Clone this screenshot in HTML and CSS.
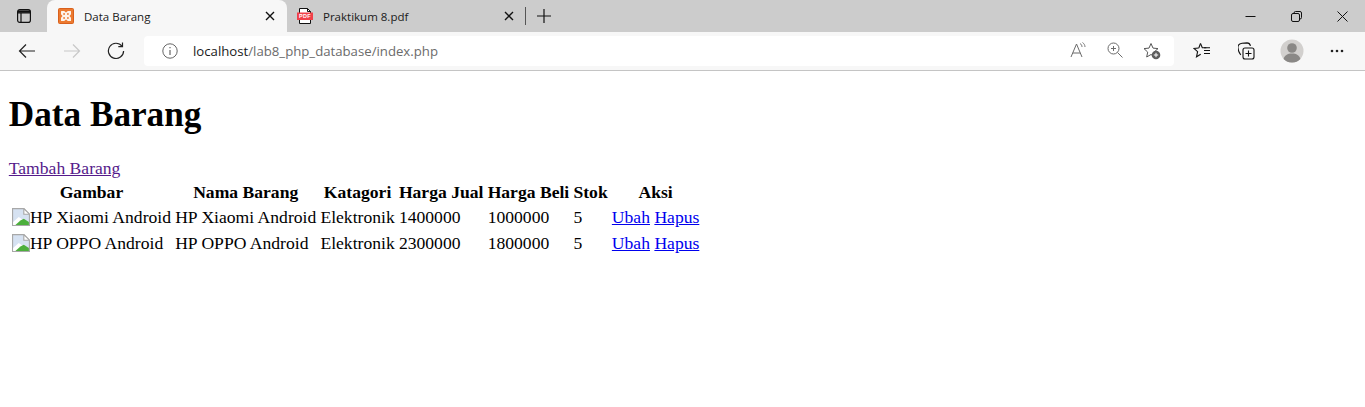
FILE: index.html
```html
<!DOCTYPE html>
<html lang="id">
<head>
  <meta charset="UTF-8" />
  <meta name="viewport" content="width=device-width, initial-scale=1.0" />
  <title>Data Barang</title>
  <link rel="stylesheet" href="styles.css">
</head>
<body>
  <header class="browser">
    <div class="tabstrip">
      <div class="strip-btn">
        <svg width="16" height="16" viewBox="0 0 16 16" fill="none" stroke="#111" stroke-width="1.2"><rect x="1.6" y="1.6" width="12.8" height="12.8" rx="2.2"/><path d="M1.6 5h12.8M5 5v9.4" /><path d="M2 2.4h12v2.4H2z" fill="#111" stroke="none"/></svg>
      </div>
      <div class="tab tab-active">
        <svg class="tab-icon" width="16" height="16" viewBox="0 0 16 16"><rect x=".5" y=".5" width="15" height="15" rx="1" fill="#ec7a30" stroke="#d9601c"/><path d="M3 3.500q0-.5.5-.5h2.700l1.800 1.500L9.800 3h2.700q.5 0 .5.5v2.700L11.500 8 13 9.800v2.700q0 .5-.5.5H9.800L8 11.500 6.200 13H3.500q-.5 0-.5-.5V9.800L4.500 8 3 6.200z" fill="#fdf3ea"/><path d="M5.200 5.200h1.800v1.500H5.200zM9 5.200h1.800v1.500H9zM5.200 9.300h1.800v1.500H5.200zM9 9.300h1.800v1.500H9z" fill="#ec7a30"/></svg>
        <span class="tab-title">Data Barang</span>
        <svg class="tab-close" width="10" height="10" viewBox="0 0 10 10" stroke="#111" stroke-width="1.4"><path d="M1 1l8 8M9 1L1 9"/></svg>
      </div>
      <div class="tab tab-last">
        <svg class="tab-icon" width="16" height="16" viewBox="0 0 16 16"><path d="M2.500.5h8l3 3v12h-11z" fill="#fff" stroke="#111"/><path d="M10.500.5v3h3" fill="none" stroke="#111"/><rect y="4.500" width="16" height="7.500" fill="#f1404a"/><text x="8" y="10.300" text-anchor="middle" class="pdf-label">PDF</text></svg>
        <span class="tab-title">Praktikum 8.pdf</span>
        <svg class="tab-close" width="10" height="10" viewBox="0 0 10 10" stroke="#111" stroke-width="1.4"><path d="M1 1l8 8M9 1L1 9"/></svg>
      </div>
      <div class="tab-divider"></div>
      <div class="new-tab">
        <svg width="14" height="14" viewBox="0 0 14 14" stroke="#111" stroke-width="1.2"><path d="M7 0v14M0 7h14"/></svg>
      </div>
      <div class="window-controls">
        <div class="win-btn"><svg width="11" height="11" viewBox="0 0 11 11" stroke="#111"><path d="M.5 5.500h10"/></svg></div>
        <div class="win-btn"><svg width="11" height="11" viewBox="0 0 11 11" fill="none" stroke="#111"><rect x=".5" y="2.500" width="8" height="8" rx="1.500"/><path d="M3 2.400V2A1.500 1.500 0 0 1 4.500.5h4.500A1.500 1.500 0 0 1 10.500 2v4.500A1.500 1.500 0 0 1 9 8"/></svg></div>
        <div class="win-btn"><svg width="11" height="11" viewBox="0 0 11 11" stroke="#111"><path d="M.5.5l10 10M10.500.5l-10 10"/></svg></div>
      </div>
    </div>
    <div class="toolbar">
      <div class="nav-btn"><svg width="18" height="16" viewBox="0 0 18 16" fill="none" stroke="#222" stroke-width="1.200"><path d="M17 8H1.500M8 1.500L1.500 8 8 14.500"/></svg></div>
      <div class="nav-btn"><svg width="18" height="16" viewBox="0 0 18 16" fill="none" stroke="#c8c8c8" stroke-width="1.200"><path d="M1 8h15.500M10 1.500L16.500 8 10 14.500"/></svg></div>
      <div class="nav-btn"><svg width="18" height="18" viewBox="0 0 18 18" fill="none" stroke="#222" stroke-width="1.200"><path d="M15 4.200A7.600 7.600 0 1 0 16.600 9"/><path d="M15.500 .5v4.200h-4.200"/></svg></div>
      <div class="addressbar">
        <svg class="info-icon" width="16" height="16" viewBox="0 0 16 16" fill="none" stroke="#666"><circle cx="8" cy="8" r="7.200"/><path d="M8 7v5" stroke-width="1.200"/><path d="M8 4v1.300" stroke-width="1.200"/></svg>
        <span class="url"><span class="url-host">localhost</span>/lab8_php_database/index.php</span>
        <div class="addr-icons">
          <div class="addr-btn"><svg width="18" height="16" viewBox="-2 0 18 16" fill="none" stroke="#6b6b6b"><path d="M0 15L5.500 2 11 15M1.800 11h7.400"/><path d="M9 1.500c1.400.8 2 2 2 3.500M11.500 .5c1.600 1.100 2.500 2.700 2.500 4.500" stroke-width=".9"/></svg></div>
          <div class="addr-btn"><svg width="16" height="16" viewBox="0 0 16 16" fill="none" stroke="#6b6b6b"><circle cx="6.500" cy="6.500" r="5.500"/><path d="M10.500 10.500l5 5M6.500 4v5M4 6.500h5"/></svg></div>
          <div class="addr-btn"><svg width="18" height="18" viewBox="0 0 18 18"><path d="M8 1.500l2 4.600 5 .5-3.700 3.300 1 4.900L8 12.500l-4.300 2.500 1-4.900L1 6.600l5-.5z" fill="none" stroke="#555" stroke-width="1"/><circle cx="13" cy="13" r="4.300" fill="#5c5c5c"/><path d="M13 10.800v4.400M10.800 13h4.400" stroke="#fff"/></svg></div>
        </div>
      </div>
      <div class="tool-icons">
        <div class="tool-btn"><svg width="18" height="18" viewBox="0 0 18 18" fill="none" stroke="#111" stroke-width="1.100"><path d="M7.500 1.500l1.800 4.300 4-.1M5.800 6L1 6.400l3.600 3.300-1.100 5.100 4.200-2.600"/><path d="M7.500 1.500L5.800 6M11 8.500h6M11 11.500h6M11 5.700h6"/></svg></div>
        <div class="tool-btn"><svg width="18" height="18" viewBox="1 0 18 18" fill="none" stroke="#111" stroke-width="1.100"><rect x="6" y="6" width="11" height="11" rx="2"/><path d="M11.500 8.500v6M8.500 11.500h6"/><path d="M3.800 13C2 10.500 1 8 .9 5.500.9 3 2.500 1.600 5 1.300L10 .9c1.800 0 3 1 3.500 3"/></svg></div>
        <div class="tool-btn">
          <div class="avatar">
            <svg width="24" height="24" viewBox="0 0 24 24"><circle cx="12" cy="12" r="11.500" fill="#d2d0ce"/><circle cx="12" cy="9" r="4.800" fill="#8a8886"/><path d="M3.600 20c.7-3.500 4-5.500 8.400-5.500s7.700 2 8.400 5.500A11.500 11.500 0 0 1 12 23.500 11.500 11.500 0 0 1 3.600 20z" fill="#8a8886"/></svg>
          </div>
        </div>
        <div class="tool-btn"><svg width="14" height="4" viewBox="0 0 14 4" fill="#222"><circle cx="2" cy="2" r="1.300"/><circle cx="7" cy="2" r="1.300"/><circle cx="12" cy="2" r="1.300"/></svg></div>
      </div>
    </div>
  </header>

  <main class="page">
    <h1>Data Barang</h1>
    <a class="visited" href="#">Tambah Barang</a>
    <table>
      <tr>
        <th>Gambar</th>
        <th>Nama Barang</th>
        <th>Katagori</th>
        <th>Harga Jual</th>
        <th>Harga Beli</th>
        <th>Stok</th>
        <th>Aksi</th>
      </tr>
      <tr>
        <td><svg class="broken" width="18" height="18" viewBox="0 0 16 16"><path d="M.5.500h10l5 5v10H.5z" fill="#d6e2f2" stroke="#a8a8a8"/><path d="M10.500.5v5h5z" fill="#fff" stroke="#a8a8a8"/><path d="M1 15v-2.500L6 8l3.500 2.500L8 15z" fill="#fff"/><path d="M3 15l4.500-4 3-1.500 4.500 3V15z" fill="#4caf3c"/></svg>HP Xiaomi Android</td>
        <td>HP Xiaomi Android</td>
        <td>Elektronik</td>
        <td>1400000</td>
        <td>1000000</td>
        <td>5</td>
        <td><a href="#">Ubah</a> <a href="#">Hapus</a></td>
      </tr>
      <tr>
        <td><svg class="broken" width="18" height="18" viewBox="0 0 16 16"><path d="M.5.500h10l5 5v10H.5z" fill="#d6e2f2" stroke="#a8a8a8"/><path d="M10.500.5v5h5z" fill="#fff" stroke="#a8a8a8"/><path d="M1 15v-2.500L6 8l3.500 2.500L8 15z" fill="#fff"/><path d="M3 15l4.500-4 3-1.500 4.500 3V15z" fill="#4caf3c"/></svg>HP OPPO Android</td>
        <td>HP OPPO Android</td>
        <td>Elektronik</td>
        <td>2300000</td>
        <td>1800000</td>
        <td>5</td>
        <td><a href="#">Ubah</a> <a href="#">Hapus</a></td>
      </tr>
    </table>
  </main>
</body>
</html>
```

FILE: styles.css
```css
html, body {
  margin: 0;
  padding: 0;
  overflow: hidden;
  background: white;
}
.browser {
  font-family: 'Open Sans', sans-serif;
  color: #1a1a1a;
}
svg {
  display: block;
}
.tabstrip {
  display: flex;
  height: 32px;
  background: #cccccc;
}
.strip-btn {
  width: 47px;
  display: flex;
  justify-content: center;
  align-items: center;
}
.tab {
  width: 240px;
  display: flex;
  align-items: center;
  padding: 0 10px;
  box-sizing: border-box;
  font-size: 11.5px;
}
.tab-active {
  padding-left: 11px;
  background: #f7f7f7;
  border-radius: 8px 8px 0 0;
}
.tab-last {
  width: 238px;
}
.tab-icon {
  margin-right: 10px;
}
.tab-title {
  flex: 1;
}
.tab-close {
  margin-right: 1px;
}
.tab-active .tab-close {
  margin-right: 2px;
}
.pdf-label {
  font-family: 'Liberation Sans', sans-serif;
  font-size: 5.5px;
  font-weight: bold;
  letter-spacing: 0.4px;
  fill: white;
}
.tab-divider {
  width: 1px;
  height: 18px;
  margin-top: 7px;
  background: #555;
}
.new-tab {
  width: 36px;
  display: flex;
  justify-content: center;
  align-items: center;
}
.window-controls {
  display: flex;
  margin-left: auto;
}
.win-btn {
  width: 46px;
  display: flex;
  justify-content: center;
  align-items: center;
}
.toolbar {
  display: flex;
  align-items: center;
  height: 38px;
  padding-left: 5px;
  background: #f7f7f7;
  border-bottom: 1px solid #c4c4c4;
}
.nav-btn {
  width: 44.5px;
  display: flex;
  justify-content: center;
}
.addressbar {
  display: flex;
  align-items: center;
  width: 1030px;
  height: 30px;
  margin-left: 5px;
  padding-left: 18px;
  box-sizing: border-box;
  background: white;
  border-radius: 4px;
}
.info-icon {
  margin-right: 15.5px;
}
.url {
  font-size: 13.2px;
  color: #6b6b6b;
}
.url-host {
  color: #1a1a1a;
}
.addr-icons {
  display: flex;
  margin-left: auto;
  padding-right: 3px;
}
.addr-btn {
  width: 37px;
  display: flex;
  justify-content: center;
}
.tool-icons {
  display: flex;
  margin-left: 6px;
}
.tool-btn {
  width: 45px;
  display: flex;
  justify-content: center;
  align-items: center;
}
.page {
  margin: 8.8px;
  font-family: 'Liberation Serif', serif;
  font-size: 17.6px;
  color: black;
}
h1 {
  font-size: 35.2px;
  margin: 23.6px 0;
}
a {
  color: #0000ee;
}
a.visited {
  color: #551a8b;
}
table {
  border-spacing: 2.2px;
}
th, td {
  padding: 1.1px;
}
.broken {
  display: inline-block;
  vertical-align: -3px;
}
```
